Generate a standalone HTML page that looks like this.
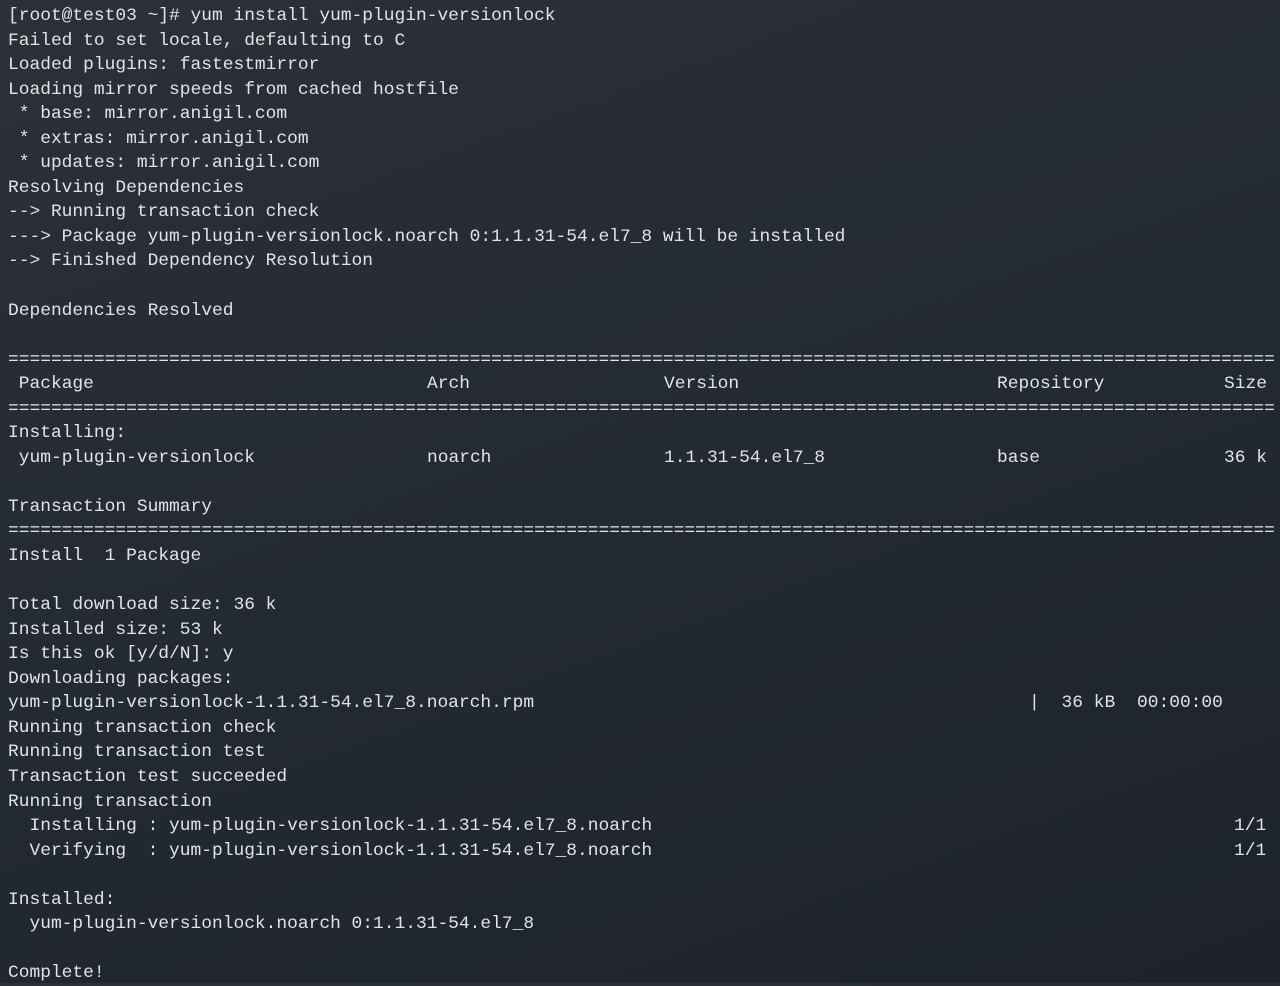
<!DOCTYPE html>
<html><head><meta charset="utf-8"><style>
html,body{margin:0;padding:0;}
body{width:1280px;height:983px;overflow:hidden;background:linear-gradient(160deg,#2c3037 0%,#242a32 50%,#1d222b 100%);}
.t{position:absolute;left:8px;top:4px;font-family:"Liberation Mono",monospace;font-size:17.9px;color:#e2e3e4;}
.l{position:relative;height:24.56px;line-height:24.56px;white-space:pre;}
.l span{position:absolute;top:0;}
</style></head><body><div class="t">
<div class="l">[root@test03 ~]# yum install yum-plugin-versionlock</div>
<div class="l">Failed to set locale, defaulting to C</div>
<div class="l">Loaded plugins: fastestmirror</div>
<div class="l">Loading mirror speeds from cached hostfile</div>
<div class="l"> * base: mirror.anigil.com</div>
<div class="l"> * extras: mirror.anigil.com</div>
<div class="l"> * updates: mirror.anigil.com</div>
<div class="l">Resolving Dependencies</div>
<div class="l">--&gt; Running transaction check</div>
<div class="l">---&gt; Package yum-plugin-versionlock.noarch 0:1.1.31-54.el7_8 will be installed</div>
<div class="l">--&gt; Finished Dependency Resolution</div>
<div class="l"> </div>
<div class="l">Dependencies Resolved</div>
<div class="l"> </div>
<div class="l">======================================================================================================================</div>
<div class="l"><span style="left:10.75px">Package</span><span style="left:419px">Arch</span><span style="left:656px">Version</span><span style="left:989px">Repository</span><span style="left:1216px">Size</span></div>
<div class="l">======================================================================================================================</div>
<div class="l">Installing:</div>
<div class="l"><span style="left:10.75px">yum-plugin-versionlock</span><span style="left:419px">noarch</span><span style="left:656px">1.1.31-54.el7_8</span><span style="left:989px">base</span><span style="left:1216px">36 k</span></div>
<div class="l"> </div>
<div class="l">Transaction Summary</div>
<div class="l">======================================================================================================================</div>
<div class="l">Install  1 Package</div>
<div class="l"> </div>
<div class="l">Total download size: 36 k</div>
<div class="l">Installed size: 53 k</div>
<div class="l">Is this ok [y/d/N]: y</div>
<div class="l">Downloading packages:</div>
<div class="l">yum-plugin-versionlock-1.1.31-54.el7_8.noarch.rpm<span style="left:1021px">|</span><span style="left:1053.5px">36 kB</span><span style="left:1129px">00:00:00</span></div>
<div class="l">Running transaction check</div>
<div class="l">Running transaction test</div>
<div class="l">Transaction test succeeded</div>
<div class="l">Running transaction</div>
<div class="l">  Installing : yum-plugin-versionlock-1.1.31-54.el7_8.noarch<span style="left:1226px">1/1</span></div>
<div class="l">  Verifying  : yum-plugin-versionlock-1.1.31-54.el7_8.noarch<span style="left:1226px">1/1</span></div>
<div class="l"> </div>
<div class="l">Installed:</div>
<div class="l">  yum-plugin-versionlock.noarch 0:1.1.31-54.el7_8</div>
<div class="l"> </div>
<div class="l">Complete!</div>
</div></body></html>
